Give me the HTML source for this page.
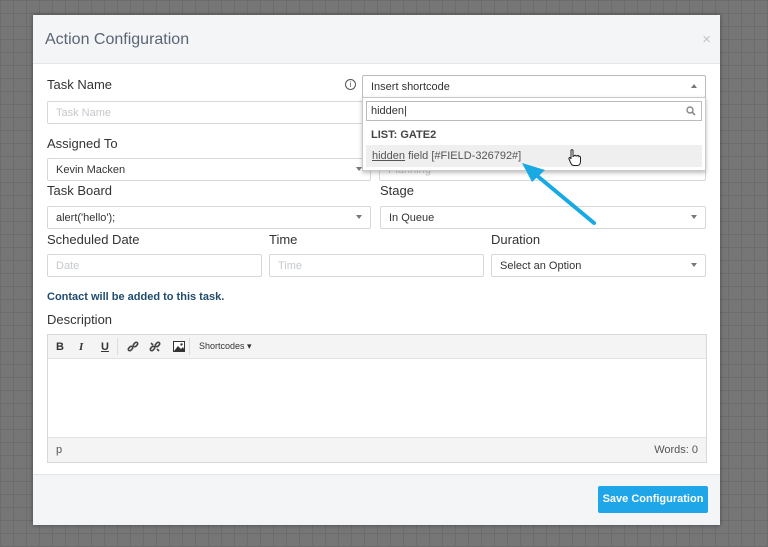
<!DOCTYPE html>
<html><head><meta charset="utf-8"><style>
*{box-sizing:border-box;margin:0;padding:0}
body{width:768px;height:547px;overflow:hidden;font-family:"Liberation Sans",sans-serif;background-color:#767676;background-image:linear-gradient(#6c6c6c 1px,transparent 1px),linear-gradient(90deg,#6c6c6c 1px,transparent 1px);background-size:13px 13px;position:relative}
.m{position:absolute;left:33px;top:15px;width:687px;height:510px;background:#fff;box-shadow:0 0 4px rgba(0,0,0,.4)}
.hd{position:absolute;left:0;top:0;width:100%;height:49px;background:#f4f5f7;border-bottom:1px solid #e3e5e8}
.hd span{position:absolute;left:12px;top:16px;font-size:16px;color:#5b6475}
.x{position:absolute;right:9px;top:16px;font-size:15px;color:#c4c4c4}
.a{position:absolute}
.l{font-size:13px;color:#333}
.in{position:absolute;height:23px;border:1px solid #d5d8dc;border-radius:2px;font-size:11px;color:#333;padding:5px 8px;background:#fff}
.ph{color:#c5c8cc}
.car{position:absolute;right:8px;top:8px;width:0;height:0;border-left:3px solid transparent;border-right:3px solid transparent;border-top:4px solid #777}
.ft{position:absolute;left:0;top:459px;width:100%;height:51px;background:#f4f5f7;border-top:1px solid #e3e5e8}
.btn{position:absolute;left:565px;top:11px;width:110px;height:27px;background:#1ea6e9;border-radius:2px;color:#fff;font-size:11px;font-weight:bold;text-align:center;line-height:27px}
</style></head><body>
<div class="m">
<div class="hd"><span>Action Configuration</span><div class="x">×</div></div>
<div class="a l" style="left:14px;top:62px">Task Name</div>
<div class="a" style="left:312px;top:64px;width:11px;height:11px;border:1px solid #555;border-radius:50%;font-size:8px;text-align:center;line-height:9px;color:#555">i</div>
<div class="in ph" style="left:14px;top:86px;width:330px">Task Name</div>
<div class="a l" style="left:14px;top:121px">Assigned To</div>
<div class="in" style="left:14px;top:143px;width:324px">Kevin Macken<div class="car"></div></div>
<div class="in ph" style="left:346px;top:143px;width:327px">Planning</div>
<div class="a l" style="left:14px;top:168px">Task Board</div>
<div class="a l" style="left:347px;top:168px">Stage</div>
<div class="in" style="left:14px;top:191px;width:324px">alert('hello');<div class="car"></div></div>
<div class="in" style="left:347px;top:191px;width:326px">In Queue<div class="car"></div></div>
<div class="a l" style="left:14px;top:217px">Scheduled Date</div>
<div class="a l" style="left:236px;top:217px">Time</div>
<div class="a l" style="left:458px;top:217px">Duration</div>
<div class="in ph" style="left:14px;top:239px;width:215px">Date</div>
<div class="in ph" style="left:236px;top:239px;width:215px">Time</div>
<div class="in" style="left:458px;top:239px;width:215px">Select an Option<div class="car"></div></div>
<div class="a" style="left:14px;top:276px;font-size:11px;font-weight:bold;color:#1f4c6e">Contact will be added to this task.</div>
<div class="a l" style="left:14px;top:297px">Description</div>
<div class="a" style="left:14px;top:319px;width:660px;height:129px;border:1px solid #d5d8dc">
 <div style="height:24px;background:#f4f4f4;border-bottom:1px solid #e2e2e2;font-size:11px;color:#333;position:relative">
  <span class="a" style="left:8px;top:6px;font-weight:bold">B</span>
  <span class="a" style="left:31px;top:6px;font-style:italic;font-family:'Liberation Serif',serif;font-weight:bold">I</span>
  <span class="a" style="left:53px;top:6px;text-decoration:underline;font-weight:bold">U</span>
  <span class="a" style="left:69px;top:3px;width:1px;height:17px;background:#ddd"></span>
  <svg class="a" style="left:79px;top:6px" width="12" height="12" viewBox="0 0 12 12"><g fill="none" stroke="#444" stroke-width="1.6"><rect x="1" y="6" width="5" height="3" rx="1.5" transform="rotate(-45 3.5 7.5)"/><rect x="6" y="2" width="5" height="3" rx="1.5" transform="rotate(-45 8.5 3.5)"/></g></svg>
  <svg class="a" style="left:101px;top:6px" width="12" height="12" viewBox="0 0 12 12"><g fill="none" stroke="#444" stroke-width="1.6"><rect x="1" y="6" width="5" height="3" rx="1.5" transform="rotate(-45 3.5 7.5)"/><rect x="6" y="2" width="5" height="3" rx="1.5" transform="rotate(-45 8.5 3.5)"/><path d="M2 2l2 2M10 10l-2-2"/></g></svg>
  <svg class="a" style="left:125px;top:6px" width="12" height="11" viewBox="0 0 12 11"><rect x="0.5" y="0.5" width="11" height="10" fill="#fff" stroke="#333"/><path d="M1 10l4-5 3 3 2-2 2 4z" fill="#333"/><circle cx="8.5" cy="3.5" r="1.2" fill="#333"/></svg>
  <span class="a" style="left:141px;top:3px;width:1px;height:17px;background:#ddd"></span>
  <span class="a" style="left:151px;top:6px;font-size:9px">Shortcodes ▾</span>
 </div>
 <div class="a" style="left:0;top:102px;width:100%;height:25px;background:#f4f4f4;border-top:1px solid #e2e2e2;font-size:11px;color:#555">
  <span class="a" style="left:8px;top:6px">p</span>
  <span class="a" style="right:8px;top:6px">Words: 0</span>
 </div>
</div>
<div class="ft"><div class="btn">Save Configuration</div></div>
<div class="in" style="left:329px;top:60px;width:344px;height:23px;border-color:#bbb">Insert shortcode<div style="position:absolute;right:8px;top:8px;border-left:3px solid transparent;border-right:3px solid transparent;border-bottom:4px solid #777"></div></div>
<div class="a" style="left:329px;top:82px;width:344px;height:74px;background:#fff;border:1px solid #c8c8c8;box-shadow:0 2px 4px rgba(0,0,0,.25)">
 <div class="a" style="left:3px;top:3px;width:336px;height:20px;border:1px solid #bbb;font-size:11px;padding:3px 4px;color:#333">hidden|<svg style="position:absolute;right:5px;top:4px" width="10" height="10" viewBox="0 0 10 10"><circle cx="4" cy="4" r="3" fill="none" stroke="#888" stroke-width="1.4"/><path d="M6.2 6.2L9 9" stroke="#888" stroke-width="1.6"/></svg></div>
 <div class="a" style="left:8px;top:31px;font-size:11px;font-weight:bold;color:#444">LIST: GATE2</div>
 <div class="a" style="left:3px;top:47px;width:336px;height:22px;background:#efefef;font-size:11px;color:#555;padding:5px 6px"><u>hidden</u> field [#FIELD-326792#]</div>
 <svg class="a" style="left:205px;top:51px" width="13" height="17" viewBox="0 0 13 17"><path d="M3 1.5c0-1 2-1 2 0v6l1-.5c.5-1 2-1 2 0l1 0c.5-1 2-.5 2 .5c.5-.5 1.5 0 1.5 1v4c0 2-1 4-3 4H6c-1.5 0-2.5-1-3-2L1 10c-.5-1 .5-2 1.5-1L3 10z" fill="#fff" stroke="#222" stroke-width="1"/></svg>
</div>
</div>
<svg class="a" style="position:absolute;left:0;top:0" width="768" height="547"><line x1="594" y1="223" x2="535" y2="174" stroke="#19a9e3" stroke-width="4" stroke-linecap="round"/><polygon points="522,163 545,170 532,182" fill="#19a9e3"/></svg>
</body></html>
